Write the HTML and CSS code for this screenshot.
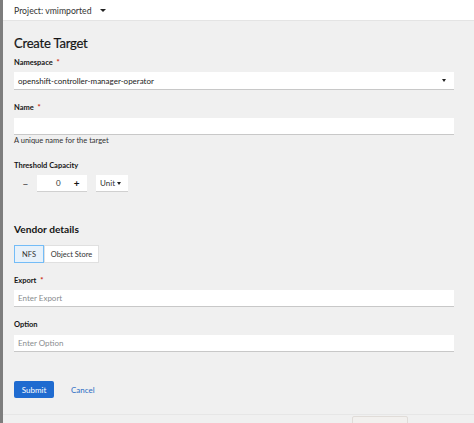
FILE: index.html
```html
<!DOCTYPE html>
<html>
<head>
<meta charset="utf-8">
<link rel="stylesheet" href="styles.css">
</head>
<body>
<div class="frame">
  <header class="topbar">
    <span class="project">Project: vmimported</span>
    <span class="caret-dark"></span>
  </header>
  <main class="content">
    <h1 class="title">Create Target</h1>

    <div class="field f-ns">
      <label class="lbl">Namespace <span class="req">*</span></label>
      <div class="box select">
        <span class="val">openshift-controller-manager-operator</span>
        <span class="caret-dark small"></span>
      </div>
    </div>

    <div class="field f-name">
      <label class="lbl">Name <span class="req">*</span></label>
      <div class="box"></div>
      <div class="help">A unique name for the target</div>
    </div>

    <div class="field f-thr">
      <label class="lbl">Threshold Capacity</label>
      <div class="numrow">
        <span class="minus">&minus;</span>
        <div class="numbox"><span class="zero">0</span><span class="plus">+</span></div>
        <div class="unit">Unit<span class="caret-dark small"></span></div>
      </div>
    </div>

    <h2 class="subtitle">Vendor details</h2>
    <div class="toggle">
      <span class="tg active">NFS</span>
      <span class="tg">Object Store</span>
    </div>

    <div class="field f-exp">
      <label class="lbl">Export <span class="req">*</span></label>
      <div class="box"><span class="ph">Enter Export</span></div>
    </div>

    <div class="field f-opt">
      <label class="lbl">Option</label>
      <div class="box"><span class="ph">Enter Option</span></div>
    </div>

    <div class="actions">
      <span class="btn-primary">Submit</span>
      <span class="link">Cancel</span>
    </div>
  </main>
  <div class="footer">
    <div class="ghost"></div>
  </div>
</div>
</body>
</html>
```
FILE: styles.css
```css
html, body {
  margin: 0;
  padding: 0;
}
body {
  width: 474px;
  height: 423px;
  overflow: hidden;
  background: #f0f0f0;
  font-family: Lato, "Open Sans", "Liberation Sans", sans-serif;
  color: #151515;
}
.frame {
  height: 423px;
  border-left: 3px solid #7d7d7d;
  box-sizing: border-box;
  display: flex;
  flex-direction: column;
}
.topbar {
  height: 21px;
  background: #ffffff;
  border-bottom: 1px solid #e4e4e4;
  display: flex;
  align-items: center;
  padding-left: 11px;
  box-sizing: border-box;
}
.project {
  font-size: 8.7px;
  color: #333;
}
.caret-dark {
  display: inline-block;
  width: 0;
  height: 0;
  border-left: 3px solid transparent;
  border-right: 3px solid transparent;
  border-top: 3px solid #222;
  margin-left: 8px;
}
.caret-dark.small {
  border-left-width: 2.5px;
  border-right-width: 2.5px;
  border-top-width: 3px;
  margin-left: 2px;
}
.content {
  padding: 0 20px 0 11px;
  flex: 1;
}
.title {
  margin: 13px 0 0 0;
  font-size: 13px;
  font-weight: 400;
  line-height: 18px;
  letter-spacing: -0.2px;
  color: #151515;
  -webkit-text-stroke: 0.2px #151515;
}
.field {
  display: flex;
  flex-direction: column;
}
.lbl {
  font-size: 7.5px;
  font-weight: 700;
  line-height: 10px;
  height: 10px;
  color: #151515;
}
.req {
  color: #c9190b;
  margin-left: 2px;
}
.box {
  height: 17px;
  background: #fff;
  border-bottom: 1px solid #c8c8c8;
  box-sizing: border-box;
  display: flex;
  align-items: center;
  padding: 0 4px;
  font-size: 8px;
}
.select {
  height: 18px;
  justify-content: space-between;
  padding-right: 8px;
}
.select .val {
  color: #222;
}
.ph {
  color: #8a8d90;
}
.help {
  font-size: 7.5px;
  line-height: 10px;
  margin-top: 1px;
  color: #333;
}
.f-ns { margin-top: 6px; }
.f-ns .lbl { margin-bottom: 4px; }
.f-name { margin-top: 13px; }
.f-name .lbl { margin-bottom: 5px; }
.f-thr { margin-top: 15px; }
.f-thr .lbl { margin-bottom: 4px; }
.numrow {
  display: flex;
  align-items: center;
  height: 17px;
}
.minus {
  width: 23px;
  text-align: center;
  font-size: 10px;
  color: #333;
}
.numbox {
  width: 50px;
  height: 17px;
  background: #fff;
  border-bottom: 1px solid #d0d0d0;
  box-sizing: border-box;
  display: flex;
  align-items: center;
  font-size: 8px;
}
.zero {
  margin-left: 19px;
  color: #333;
}
.plus {
  margin-left: 13px;
  font-weight: 700;
  font-size: 10px;
}
.unit {
  margin-left: 9px;
  width: 32px;
  height: 17px;
  background: #fff;
  border-bottom: 1px solid #d0d0d0;
  box-sizing: border-box;
  display: flex;
  align-items: center;
  padding-left: 4px;
  font-size: 8px;
  color: #333;
}
.subtitle {
  margin: 30px 0 0 0;
  font-size: 10.2px;
  font-weight: 700;
  line-height: 14px;
}
.toggle {
  display: flex;
  margin-top: 9px;
  height: 18px;
}
.tg {
  display: flex;
  align-items: center;
  justify-content: center;
  background: #fff;
  border: 1px solid #e0e0e0;
  font-size: 7.5px;
  color: #333;
  box-sizing: border-box;
  width: 55px;
}
.tg.active {
  width: 30px;
  background: #e7f1fa;
  border-color: #73bcf7;
  color: #333;
}
.f-exp { margin-top: 13px; }
.f-exp .lbl { margin-bottom: 4px; }
.f-opt { margin-top: 13px; }
.f-opt .lbl { margin-bottom: 5px; }
.actions {
  margin-top: 29px;
  display: flex;
  align-items: center;
  height: 17px;
}
.btn-primary {
  width: 40px;
  height: 17px;
  background: #1f6bd0;
  color: #fff;
  border-radius: 2px;
  display: flex;
  align-items: center;
  justify-content: center;
  font-size: 8px;
}
.link {
  margin-left: 17px;
  color: #2b6cc4;
  font-size: 8px;
}
.footer {
  height: 8px;
  border-top: 1px solid #e6e6e6;
  position: relative;
}
.ghost {
  position: absolute;
  left: 349px;
  top: 1px;
  width: 54px;
  height: 10px;
  border: 1px solid #e0dcd8;
  border-radius: 2px;
  background: #f2f0ee;
}
```
